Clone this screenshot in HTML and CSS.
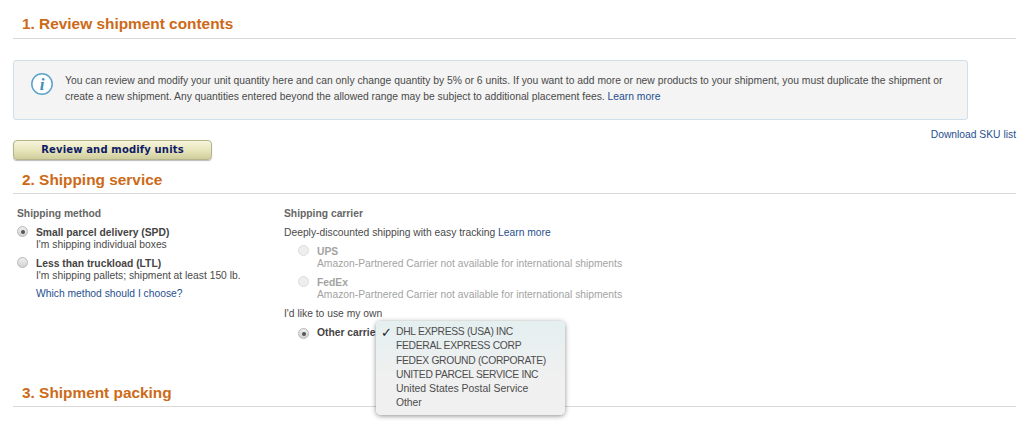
FILE: index.html
```html
<!DOCTYPE html>
<html lang="en">
<head>
<meta charset="utf-8">
<title>Review shipment</title>
<link rel="stylesheet" href="styles.css">
</head>
<body>
<main class="page">
  <h2 class="section-title first">1. Review shipment contents</h2>
  <div class="notice">
    <svg class="notice-icon" width="24" height="24" viewBox="0 0 24 24" aria-hidden="true">
      <circle cx="12" cy="12" r="10.2" fill="#fff" stroke="#5ba3c9" stroke-width="1.5"/>
      <text x="12" y="18" text-anchor="middle" class="notice-i">i</text>
    </svg>
    <p class="notice-text">You can review and modify your unit quantity here and can only change quantity by 5% or 6 units. If you want to add more or new products to your shipment, you must duplicate the shipment or create a new shipment. Any quantities entered beyond the allowed range may be subject to additional placement fees. <a href="#">Learn more</a></p>
  </div>
  <div class="download-row"><a href="#">Download SKU list</a></div>
  <button class="review-button" type="button">Review and modify units</button>
  <h2 class="section-title second">2. Shipping service</h2>
  <div class="service">
    <section class="method-col">
      <h3 class="col-title">Shipping method</h3>
      <div class="option">
        <span class="radio checked"></span>
        <div><strong>Small parcel delivery (SPD)</strong><br>I'm shipping individual boxes</div>
      </div>
      <div class="option">
        <span class="radio"></span>
        <div><strong>Less than truckload (LTL)</strong><br>I'm shipping pallets; shipment at least 150 lb.</div>
      </div>
      <a class="method-link" href="#">Which method should I choose?</a>
    </section>
    <section class="carrier-col">
      <h3 class="col-title">Shipping carrier</h3>
      <p class="carrier-line">Deeply-discounted shipping with easy tracking <a href="#">Learn more</a></p>
      <div class="option disabled">
        <span class="radio"></span>
        <div><strong>UPS</strong><br>Amazon-Partnered Carrier not available for international shipments</div>
      </div>
      <div class="option disabled">
        <span class="radio"></span>
        <div><strong>FedEx</strong><br>Amazon-Partnered Carrier not available for international shipments</div>
      </div>
      <p class="carrier-line">I'd like to use my own</p>
      <div class="option other">
        <span class="radio checked"></span>
        <div class="other-label"><strong>Other carrie</strong>
          <ul class="menu">
            <li class="upper selected">DHL EXPRESS (USA) INC</li>
            <li class="upper">FEDERAL EXPRESS CORP</li>
            <li class="upper">FEDEX GROUND (CORPORATE)</li>
            <li class="upper">UNITED PARCEL SERVICE INC</li>
            <li class="mixed">United States Postal Service</li>
            <li>Other</li>
          </ul>
        </div>
      </div>
    </section>
  </div>
  <h2 class="section-title">3. Shipment packing</h2>
</main>
</body>
</html>
```
FILE: styles.css
```css
html, body { margin: 0; padding: 0; background: #fff; overflow: hidden; }
body { font-family: "Liberation Sans", Arial, sans-serif; font-size: 10.3px; line-height: 12px; color: #4a4a4a; }
a { color: #1f4f8f; text-decoration: none; }
p { margin: 0; }
.page { width: 1003px; height: 421px; margin-left: 13px; box-sizing: border-box; padding-top: 15px; }
.section-title { margin: 0; padding: 0 0 4px 9px; height: 18px; line-height: 18px; font-size: 15.4px; font-weight: bold; color: #cc6a17; border-bottom: 1px solid #d9d9d9; box-sizing: content-box; }
.first { padding-bottom: 5px; }
.second { margin-top: 11px; }
.notice { width: 955px; height: 60px; margin-top: 21px; box-sizing: border-box; border: 1px solid #cfe0ea; border-radius: 3px; background: #f4f4f4; display: flex; padding: 11px 0 0 16px; }
.notice-icon { flex: none; margin-right: 11px; }
.notice-i { font-family: "Liberation Serif", serif; font-style: italic; font-weight: bold; font-size: 17px; fill: #3f8fba; }
.notice-text { width: 890px; font-size: 10.33px; line-height: 15.5px; padding-top: 1px; }
.download-row { text-align: right; height: 14px; line-height: 14px; margin-top: 8px; }
.review-button { display: block; width: 199px; height: 20px; margin-top: -2px; padding: 0 0 1px; border: 1px solid #b5b48c; border-radius: 4px; background: linear-gradient(#f6f5dc, #e6e4b8 55%, #cfcd9d); font-family: "DejaVu Sans", sans-serif; font-size: 10px; font-weight: bold; color: #0f1a66; box-shadow: 0 1px 1px #bbb; letter-spacing: .15px; }
.service { display: flex; height: 190px; }
.method-col { width: 267px; padding: 14px 0 0 4px; flex: none; display: flex; flex-direction: column; align-items: flex-start; }
.carrier-col { flex: 1; padding-top: 14px; display: flex; flex-direction: column; }
.col-title { margin: 0; font-size: 10.3px; line-height: 12px; font-weight: bold; color: #666; }
.option { display: flex; gap: 8px; margin-top: 7px; }
.option strong { color: #444; }
.radio { flex: none; width: 9px; height: 9px; margin-top: -1px; border-radius: 50%; border: 1px solid #b8b8b8; background: linear-gradient(#eee, #d2d2d2); display: flex; align-items: center; justify-content: center; }
.radio.checked::after { content: ""; width: 4px; height: 4px; border-radius: 50%; background: #555; }
.other .radio { margin-top: 1px; }
.method-link { margin: 6px 0 0 19px; }
.carrier-line { margin-top: 7px; }
.carrier-col .option { margin-left: 14px; }
.disabled, .disabled strong { color: #a3a3a3; }
.disabled .radio { border-color: #ddd; background: #eee; }
.other-label { position: relative; white-space: nowrap; }
.menu { position: absolute; left: 59px; top: -6px; width: 189px; height: 94px; margin: 0; padding: 4px 0 0; box-sizing: border-box; list-style: none; background: linear-gradient(#e4eff0, #f0f0f0 60%); border-radius: 5px; box-shadow: 0 1px 5px rgba(0,0,0,.45); color: #4d4d4d; z-index: 2; }
.menu li { line-height: 14.3px; padding-left: 20px; position: relative; }
.menu .upper { letter-spacing: -.3px; }
.menu .mixed { font-size: 10.45px; }
.menu .selected::before { content: "✓"; position: absolute; left: 5px; top: 1px; color: #222; font-family: "DejaVu Sans", sans-serif; font-size: 13px; font-weight: bold; }
```
